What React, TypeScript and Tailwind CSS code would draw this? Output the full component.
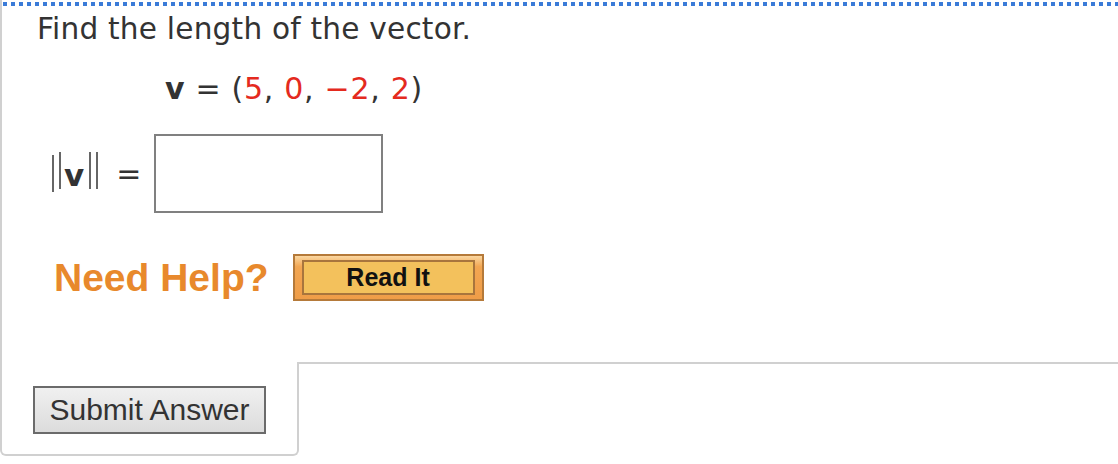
import React from "react";

const dv = { fontFamily: '"DejaVu Sans", Verdana, sans-serif' };
const ar = { fontFamily: '"Liberation Sans", Arial, Helvetica, sans-serif' };

function Bar() {
  return <span className="inline-block w-[2px] h-[37px] bg-[#666]" />;
}

export default function App() {
  return (
    <div className="w-[1118px] h-[464px] bg-white overflow-hidden text-[#333]">
      <div className="flex flex-col h-[362px] border-l-2 border-[#d0d0d0]">
        <div className="mt-[2px] ml-[1px] h-[4px] bg-[repeating-linear-gradient(to_right,#3a7bd8_0_4px,transparent_4px_8px)]" />
        <div className="mt-[5px] pl-[35px] text-[29.6px] leading-[36px] tracking-[0.2px]" style={dv}>
          Find the length of the vector.
        </div>
        <div className="mt-[24px] pl-[163px] text-[30px] leading-[36px] whitespace-pre tracking-[0.7px]" style={dv}>
          <span className="font-bold">v</span>
          {" = ("}
          <span className="text-[#e42a1e]">5</span>
          {", "}
          <span className="text-[#e42a1e]">0</span>
          {", "}
          <span className="text-[#e42a1e]">−2</span>
          {", "}
          <span className="text-[#e42a1e]">2</span>
          {")"}
        </div>
        <div className="mt-[27px] flex items-center pl-[50px]" style={dv}>
          <Bar />
          <span className="ml-[5px]">
            <Bar />
          </span>
          <span className="ml-[3px] mt-[3px] text-[31px] leading-[36px] font-bold">v</span>
          <span className="ml-[5px]">
            <Bar />
          </span>
          <span className="ml-[5px]">
            <Bar />
          </span>
          <span className="ml-[18px] text-[30px] leading-[36px]">=</span>
          <div className="ml-[13px] w-[229px] h-[79px] border-2 border-[#808080] bg-white" />
        </div>
        <div className="mt-[41px] flex items-center pl-[52px]">
          <span className="text-[39px] leading-[39px] font-bold text-[#e8892c]" style={ar}>
            Need Help?
          </span>
          <div className="ml-[24px] w-[191px] h-[47px] border-2 border-[#b57a3a] bg-[linear-gradient(to_bottom,#fbd7a0_0%,#f2a652_25%,#ef9d48_100%)] flex items-center justify-center">
            <div
              className="w-[173px] h-[35px] border-2 border-[#a8753d] bg-[#f3c15c] flex items-center justify-center text-[25px] font-bold text-[#111]"
              style={ar}
            >
              Read It
            </div>
          </div>
        </div>
      </div>
      <div className="flex">
        <div className="w-[299px] h-[94px] border-l-2 border-r-2 border-b-2 border-[#d0d0d0] rounded-b-[6px] pt-[24px] pl-[31px]">
          <button
            className="w-[233px] h-[48px] border-2 border-[#6b6b6b] bg-[linear-gradient(to_bottom,#f0f0f0,#dcdcdc)] text-[30px] leading-none text-[#333] flex items-center justify-center"
            style={ar}
          >
            Submit Answer
          </button>
        </div>
        <div className="flex-1 border-t-2 border-[#d0d0d0]" />
      </div>
    </div>
  );
}
